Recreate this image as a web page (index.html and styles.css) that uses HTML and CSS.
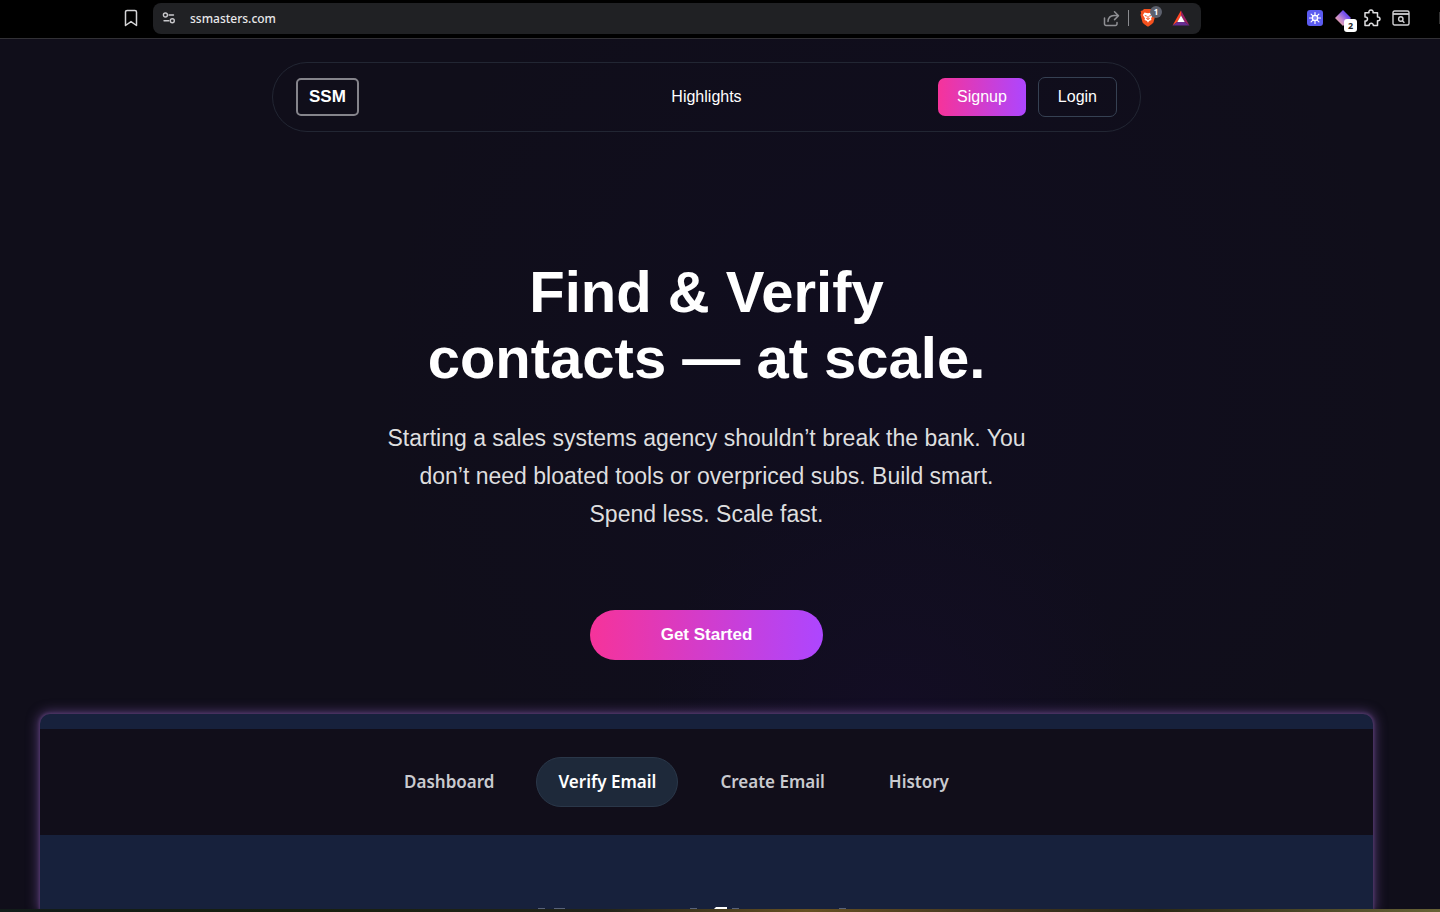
FILE: index.html
```html
<!DOCTYPE html>
<html lang="en">
<head>
<meta charset="utf-8">
<meta name="viewport" content="width=device-width, initial-scale=1">
<title>SSM</title>
<link rel="stylesheet" href="styles.css">
</head>
<body>
<div class="window">
  <div class="toolbar">
    <button class="icon-button" aria-label="Bookmark">
      <svg width="14" height="18" viewBox="0 0 14 18" fill="none" stroke="#d4d4d6" stroke-width="1.5" stroke-linejoin="round"><path d="M1.5 3a1.6 1.6 0 0 1 1.6-1.6h7.8A1.6 1.6 0 0 1 12.500 3v13.500L7 12.600 1.500 16.500z"/></svg>
    </button>
    <div class="address">
      <button class="icon-button" aria-label="Site settings">
        <svg width="14" height="14" viewBox="0 0 14 14" fill="none" stroke="#c8c8cb" stroke-width="1.4" stroke-linecap="round"><circle cx="3.400" cy="4" r="2"/><path d="M7 4h4.500"/><circle cx="10.300" cy="9.800" r="2"/><path d="M2 9.800h4.800"/></svg>
      </button>
      <input class="url" aria-label="Address" type="text" value="ssmasters.com">
      <div class="address-actions">
        <button class="icon-button" aria-label="Share">
          <svg width="17" height="17" viewBox="0 0 17 17" fill="none" stroke="#8f9094" stroke-width="1.500" stroke-linejoin="round" stroke-linecap="round"><path d="M1.500 8v6a1.500 1.500 0 0 0 1.500 1.500h9.500A1.500 1.500 0 0 0 14 14v-1.500"/><path d="M5 11.500c.2-4 2.200-5.800 6-6h4.200M11.500 1.800l4 3.900-4 3.900"/></svg>
        </button>
        <span class="divider"></span>
        <button class="icon-button shield" aria-label="Shields">
          <svg width="16" height="18" viewBox="0 0 16 18"><path fill="#f4511e" d="M4 0h8l1.500 1.600 1.800.3-.4 2.300.6 1.600-2 7.500c-.3 1-3.500 3.400-5.500 4.500-2-1.100-5.200-3.500-5.500-4.500l-2-7.500.6-1.600-.4-2.300 1.800-.3z"/><path fill="#fff" d="M8 4.200l3.500-.7 1.600 2.600-2 3.200.3 1.600-2.400 1.200L8 13.800l-1-1.700-2.400-1.200.3-1.600-2-3.200 1.600-2.600z"/><path fill="none" stroke="#f4511e" stroke-width="1" d="M4.800 6.500l2 .6M11.200 6.500l-2 .6M8 7v3M6.300 9.300L8 10.500l1.700-1.200"/></svg>
          <span class="count count-gray">1</span>
        </button>
        <button class="icon-button" aria-label="Rewards">
          <svg width="18" height="16" viewBox="0 0 18 16"><path fill="#ff4724" d="M9 .5v4.900L5.300 12 .5 15.500z"/><path fill="#9e1f63" d="M9 .5l8.500 15-4.800-3.500L9 5.400z"/><path fill="#662d91" d="M.5 15.500L5.300 12h7.400l4.800 3.500z"/><path fill="#fff" d="M9 5.400l3.700 6.600H5.300z"/></svg>
        </button>
      </div>
    </div>
    <div class="extensions">
      <button class="icon-button" aria-label="Burst extension">
        <svg width="16" height="16" viewBox="0 0 16 16"><rect width="16" height="16" rx="3" fill="#5b5bf0"/><g stroke="#fff" stroke-width="1.200" stroke-linecap="round"><path d="M8 2.500v11M2.500 8h11M4.100 4.100l7.800 7.800M11.900 4.100l-7.800 7.800"/></g><circle cx="8" cy="8" r="3.300" fill="#fff"/><circle cx="8" cy="8" r="2" fill="#8d8df7"/></svg>
      </button>
      <button class="icon-button diamond" aria-label="Diamond extension">
        <svg width="18" height="18" viewBox="0 0 18 18"><defs><linearGradient id="gem" x1="1" y1="0" x2="0" y2="1"><stop offset=".3" stop-color="#704df0"/><stop offset=".6" stop-color="#c58bd0"/><stop offset="1" stop-color="#ffb07c"/></linearGradient></defs><path fill="url(#gem)" d="M9 1l8 8-8 8-8-8z"/></svg>
        <span class="count count-white">2</span>
      </button>
      <button class="icon-button" aria-label="Extensions">
        <svg width="18" height="18" viewBox="0 0 18 18" fill="none" stroke="#dedee0" stroke-width="1.500" stroke-linejoin="round"><path d="M2 3.800h4C5.500 2.300 6.400 1 8 1s2.500 1.300 2 2.800h4.500v4.200c1.400-.3 2.500.5 2.500 1.900s-1.100 2.200-2.500 1.800v4.800H10.300c.2-1.300-.8-2.200-2.100-2.200S6 15.200 6.200 16.500H2V12c1.500.2 2.500-.7 2.500-2S3.500 7.800 2 8z"/></svg>
      </button>
      <button class="icon-button" aria-label="Search tabs">
        <svg width="18" height="16" viewBox="0 0 18 16" fill="none" stroke="#d0d0d2" stroke-width="1.400"><rect x="1" y="1" width="16" height="14" rx="1.500"/><path d="M1 4h16" stroke-width="1.800"/><circle cx="8.800" cy="9" r="2.200"/><path d="M10.400 10.700l2 2"/></svg>
      </button>
    </div>
    <span class="edge"></span>
  </div>

  <main class="page">
    <header class="nav">
      <a class="logo" href="#">SSM</a>
      <a class="nav-link" href="#highlights">Highlights</a>
      <div class="nav-actions">
        <button class="button signup">Signup</button>
        <button class="button login">Login</button>
      </div>
    </header>

    <section class="hero">
      <h1 class="title">Find &amp; Verify<br>contacts — at scale.</h1>
      <p class="lead">Starting a sales systems agency shouldn’t break the bank. You don’t need bloated tools or overpriced subs. Build smart. Spend less. Scale fast.</p>
      <button class="cta">Get Started</button>
    </section>

    <section class="preview">
      <nav class="tabs">
        <a class="tab" href="#dashboard">Dashboard</a>
        <a class="tab tab-active" href="#verify">Verify Email</a>
        <a class="tab" href="#create">Create Email</a>
        <a class="tab" href="#history">History</a>
      </nav>
      <div class="panel">
        <svg width="320" height="2" viewBox="0 0 320 2" aria-hidden="true"><g fill="#58627a"><path d="M3 1h7v1H3zM19 1h11v1H19zM155 1h7v1h-7zM197 1h7v1h-7zM304 1h7v1h-7z"/></g><path fill="#fff" d="M181 0h11v2h-13z"/></svg>
      </div>
    </section>
  </main>
  <div class="desktop"></div>
</div>
</body>
</html>
```
FILE: styles.css
```css
* { box-sizing: border-box; }

body {
  margin: 0;
  background: #100e1a;
  color: #fff;
  font-family: "Liberation Sans", Arial, sans-serif;
}

button {
  border: 0;
  padding: 0;
  background: none;
  color: inherit;
  font: inherit;
  cursor: pointer;
}

a { color: inherit; text-decoration: none; }
svg { display: block; }

.window {
  display: flex;
  flex-direction: column;
  height: 100vh;
  overflow: hidden;
}

.toolbar {
  display: flex;
  flex: none;
  align-items: center;
  height: 39px;
  padding: 0 0 2px 124px;
  background: #000;
  border-bottom: 1px solid #323136;
}

.icon-button { position: relative; flex: none; }

.address {
  display: flex;
  flex: 1;
  align-items: center;
  height: 31px;
  margin: 0 106px 0 15px;
  padding: 0 11px 0 9px;
  background: #202124;
  border-radius: 8px;
}

.url {
  flex: 1;
  min-width: 0;
  margin-left: 14px;
  padding: 0;
  border: 0;
  outline: 0;
  background: none;
  color: #e8e8ea;
  font: 500 12px "Noto Sans", sans-serif;
}

.address-actions { display: flex; align-items: center; gap: 11px; }
.divider { width: 1px; height: 16px; margin: 0 0 0 -3px; background: #8a8b8f; }
.shield { margin-right: 5px; }

.count {
  position: absolute;
  text-align: center;
  font-family: "Noto Sans", sans-serif;
  font-weight: 700;
}

.count-gray {
  top: -3px;
  right: -6px;
  width: 12px;
  height: 12px;
  border-radius: 6px;
  background: #5d616e;
  font-size: 8px;
  line-height: 12px;
}

.count-white {
  right: -5px;
  bottom: -5px;
  width: 13px;
  height: 13px;
  border-radius: 3px;
  background: #fff;
  color: #222;
  font-size: 9px;
  line-height: 13px;
}

.extensions { display: flex; align-items: center; gap: 11px; }
.edge { width: 1px; height: 12px; margin-left: 29px; background: #333; }

.page {
  display: flex;
  flex: 1;
  flex-direction: column;
  align-items: center;
  min-height: 0;
  overflow: hidden;
  padding: 23px 67px 0 40px;
  background:
    radial-gradient(circle at 62% 78%, #130d24 0, transparent 240px),
    radial-gradient(circle at 62% 40%, #100d1f 0, transparent 520px),
    #100e1a;
}

.nav {
  display: grid;
  flex: none;
  grid-template-columns: 1fr auto 1fr;
  align-items: center;
  width: 100%;
  max-width: 869px;
  height: 70px;
  padding: 0 23px;
  border: 1px solid #222633;
  border-radius: 35px;
}

.logo {
  justify-self: start;
  padding: 8px 11px;
  border: 2px solid #85848b;
  border-radius: 5px;
  font-size: 17px;
  font-weight: 700;
  line-height: 18px;
}

.nav-link { font-size: 16px; }
.nav-actions { display: flex; align-items: center; justify-content: flex-end; gap: 12px; }

.button { padding: 0 19px; border-radius: 7px; font-size: 16px; line-height: 38px; }
.signup { background: linear-gradient(90deg, #f6339a, #ad46ff); }
.login { border: 1px solid #364153; }

.hero {
  display: flex;
  flex: none;
  flex-direction: column;
  align-items: center;
  width: 100%;
  max-width: 644px;
  padding-top: 127px;
  text-align: center;
}

.title { margin: 0; font-size: 58px; line-height: 66px; }
.lead { margin: 28px 0 0; color: #dededf; font-size: 23px; line-height: 38px; }

.cta {
  width: 233px;
  margin: 77px 0 54px;
  border-radius: 25px;
  background: linear-gradient(90deg, #f6339a, #ad46ff);
  font-size: 17px;
  font-weight: 700;
  line-height: 50px;
}

.preview {
  display: flex;
  flex: 1;
  flex-direction: column;
  width: 100%;
  min-height: 0;
  padding-top: 15px;
  background: #17213c;
  border-radius: 10px 10px 0 0;
  box-shadow: 0 0 3px 1px #503768, 0 0 12px 2px #523a70;
}

.tabs {
  display: flex;
  flex: none;
  align-items: center;
  justify-content: center;
  gap: 20px;
  height: 106px;
  padding-right: 60px;
  background: #110e1a;
}

.tab {
  padding: 0 21px;
  border: 1px solid transparent;
  border-radius: 25px;
  color: #c9cacf;
  font: 600 17px/48px "Noto Sans", sans-serif;
}

.tab-active { background: #1e293a; border-color: #2a3749; color: #fff; }

.panel {
  display: flex;
  flex: 1;
  align-items: flex-end;
  justify-content: center;
  padding-right: 24px;
}

.desktop {
  flex: none;
  height: 3px;
  background: linear-gradient(90deg, #121c1a, #17200f 20%, #22241a 42%, #665022 56%, #3f3420 70%, #292815 80%, #686236);
}
```
